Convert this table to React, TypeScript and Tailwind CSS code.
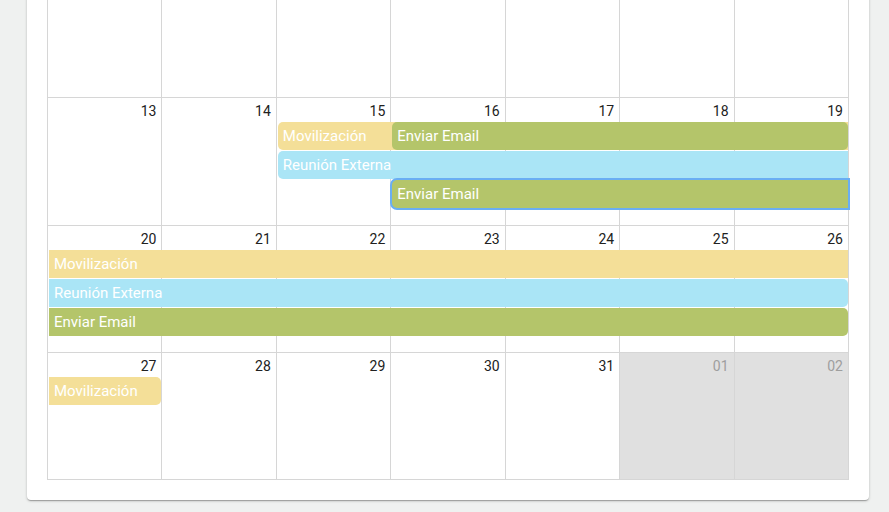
import type { CSSProperties } from "react";

type Tone = "yellow" | "blue" | "green";

interface CalEvent {
  id: string;
  title: string;
  tone: Tone;
  col: number;
  span: number;
  slot: number;
  roundLeft: boolean;
  roundRight: boolean;
  selected?: boolean;
}

interface Week {
  days: { label: string; outside?: boolean }[];
  events: CalEvent[];
}

const toneClass: Record<Tone, string> = {
  yellow: "bg-[#f4df98]",
  blue: "bg-[#aae5f6]",
  green: "bg-[#b4c56a]",
};

const range = (from: number, to: number) =>
  Array.from({ length: to - from + 1 }, (_, i) => ({ label: String(from + i) }));

// first week is scrolled past the top edge, only its lower part shows
const weeks: Week[] = [
  { days: Array.from({ length: 7 }, () => ({ label: "" })), events: [] },
  {
    days: range(13, 19),
    events: [
      { id: "m1", title: "Movilización", tone: "yellow", col: 2, span: 5, slot: 0, roundLeft: true, roundRight: false },
      { id: "e1", title: "Enviar Email", tone: "green", col: 3, span: 4, slot: 0, roundLeft: true, roundRight: true },
      { id: "r1", title: "Reunión Externa", tone: "blue", col: 2, span: 5, slot: 1, roundLeft: true, roundRight: false },
      { id: "e2", title: "Enviar Email", tone: "green", col: 3, span: 4, slot: 2, roundLeft: true, roundRight: false, selected: true },
    ],
  },
  {
    days: range(20, 26),
    events: [
      { id: "m2", title: "Movilización", tone: "yellow", col: 0, span: 7, slot: 0, roundLeft: false, roundRight: false },
      { id: "r2", title: "Reunión Externa", tone: "blue", col: 0, span: 7, slot: 1, roundLeft: false, roundRight: true },
      { id: "e3", title: "Enviar Email", tone: "green", col: 0, span: 7, slot: 2, roundLeft: false, roundRight: true },
    ],
  },
  {
    days: [...range(27, 31), { label: "01", outside: true }, { label: "02", outside: true }],
    events: [
      { id: "m3", title: "Movilización", tone: "yellow", col: 0, span: 1, slot: 0, roundLeft: false, roundRight: true },
    ],
  },
];

function EventBar({ event }: { event: CalEvent }) {
  const style: CSSProperties = {
    left: `calc(${event.col} * 100% / 7 + 1px)`,
    width: `calc(${event.span} * 100% / 7 - 2px)`,
    top: 24 + event.slot * 29,
  };
  return (
    <div
      style={style}
      className={[
        "absolute h-[28px] truncate px-[5px] text-[15px] font-normal leading-[28px] text-white",
        toneClass[event.tone],
        event.roundLeft ? "rounded-l-[5px]" : "",
        event.roundRight ? "rounded-r-[5px]" : "",
        event.selected ? "ring-2 ring-[#6aaef3]" : "",
      ].join(" ")}
    >
      {event.title}
    </div>
  );
}

function WeekRow({ week }: { week: Week }) {
  return (
    <div className="relative h-[127.33px]">
      <div className="grid h-full grid-cols-7">
        {week.days.map((day, i) => (
          <div
            key={i}
            className={
              day.outside
                ? "border-b border-r border-[#d6d6d6] bg-[#e0e0e0] pr-[5px] pt-[3px] text-right text-[14px] leading-5 text-[#9e9e9e]"
                : "border-b border-r border-[#d6d6d6] bg-white pr-[5px] pt-[3px] text-right text-[14px] leading-5 text-[#212121]"
            }
          >
            {day.label}
          </div>
        ))}
      </div>
      {week.events.map((event) => (
        <EventBar key={event.id} event={event} />
      ))}
    </div>
  );
}

export default function App() {
  return (
    <div
      className="h-[512px] w-full overflow-hidden bg-[#eff1f0]"
      style={{ fontFamily: "Roboto, 'Noto Sans', sans-serif" }}
    >
      <div className="ml-[27px] mt-[-50px] w-[842px] rounded-[4px] bg-white p-5 shadow-[0_1px_3px_rgba(0,0,0,0.2),0_1px_1px_rgba(0,0,0,0.14),0_2px_1px_-1px_rgba(0,0,0,0.12)]">
        <div className="border-l border-t border-[#d6d6d6]">
          {weeks.map((week, i) => (
            <WeekRow key={i} week={week} />
          ))}
        </div>
      </div>
    </div>
  );
}
